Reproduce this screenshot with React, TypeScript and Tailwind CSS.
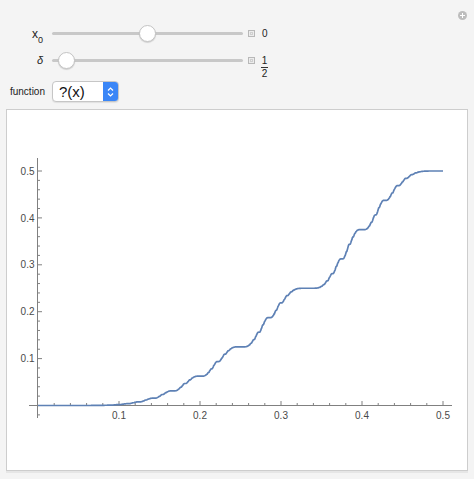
import React from "react";

// Minkowski question mark function via continued fraction expansion
function questionMark(x: number): number {
  if (x <= 0) return 0;
  let r = x;
  let acc = 0;
  let sum = 0;
  let sign = 1;
  for (let k = 0; k < 40; k++) {
    if (r < 1e-12) break;
    r = 1 / r;
    const a = Math.floor(r + 1e-12);
    r = Math.max(0, r - a);
    acc += a;
    if (acc > 60) break;
    sum += sign * 2 * Math.pow(2, -acc);
    sign = -sign;
  }
  return sum;
}

const X = (x: number) => 38 + 810 * x;
const Y = (y: number) => 405.5 - 469 * y;

const curve = Array.from({ length: 801 }, (_, i) => {
  const x = (i / 800) * 0.5;
  return `${X(x).toFixed(2)},${Y(questionMark(x)).toFixed(2)}`;
}).join(" ");

const xTicks = Array.from({ length: 25 }, (_, i) => (i + 1) * 0.02);
const yTicks = Array.from({ length: 27 }, (_, i) => (i - 1) * 0.02);
const isMajor = (v: number) => Math.abs(v * 10 - Math.round(v * 10)) < 1e-6;

function Slider({ thumb }: { thumb: number }) {
  return (
    <div className="relative w-[191px] h-[17px]">
      <div className="absolute left-0 right-0 top-[7px] h-[3px] rounded-full bg-[#c8c8c8]" />
      <div
        className="absolute top-0 w-[17px] h-[17px] rounded-full bg-white border border-[#c4c4c4] shadow-[0_1px_1px_rgba(0,0,0,0.15)]"
        style={{ left: thumb }}
      />
    </div>
  );
}

function PlusBox() {
  return (
    <div className="ml-[5px] w-[7px] h-[7px] border border-[#b8b8b8] bg-[#ececec] flex items-center justify-center">
      <div className="w-[3px] h-[3px] border border-[#cfcfcf]" />
    </div>
  );
}

export default function App() {
  return (
    <div className="relative w-[474px] h-[479px] bg-[#f4f4f4] font-['Liberation_Sans',Arial,sans-serif] text-[#222] overflow-hidden">
      <div className="absolute top-[11px] right-[7px] w-[9px] h-[9px] rounded-full bg-[#bdbdbd] flex items-center justify-center">
        <span className="absolute w-[5px] h-[1px] bg-white" />
        <span className="absolute w-[1px] h-[5px] bg-white" />
      </div>

      <div className="pt-[25px]">
        <div className="flex items-center h-[17px]">
          <div className="w-[46px] pr-[3px] text-right text-[12px] leading-none">
            x<sub className="text-[9px] align-[-3px]">0</sub>
          </div>
          <div className="ml-[6px]">
            <Slider thumb={87} />
          </div>
          <PlusBox />
          <span className="ml-[7px] text-[10px]">0</span>
        </div>

        <div className="flex items-start mt-[10px] h-[19px]">
          <div className="w-[46px] pr-[3px] h-[17px] flex items-center justify-end text-[11px] italic leading-none">
            δ
          </div>
          <div className="ml-[6px]">
            <Slider thumb={6} />
          </div>
          <div className="h-[17px] flex items-center">
            <PlusBox />
          </div>
          <div className="ml-[6px] mt-[4px] flex flex-col items-center text-[10px] leading-[10px]">
            <span>1</span>
            <span className="w-[7px] h-[1px] bg-[#333] my-[1px]" />
            <span>2</span>
          </div>
        </div>

        <div className="flex items-center mt-[10px] h-[21px]">
          <div className="w-[46px] pr-[1px] text-right text-[10px]">function</div>
          <div className="ml-[6px] w-[67px] h-[21px] flex rounded-[4px] border border-[#c6c6c6] bg-white overflow-hidden shadow-[0_1px_1px_rgba(0,0,0,0.08)]">
            <div className="flex-1 flex items-center pl-[6px] text-[15px] leading-none text-[#111]">?(x)</div>
            <div className="w-[15px] bg-[#3a86f7] flex flex-col items-center justify-center">
              <svg width="7" height="12" viewBox="0 0 7 12">
                <path d="M1 4.5 L3.5 2 L6 4.5 M1 7.5 L3.5 10 L6 7.5" fill="none" stroke="white" strokeWidth="1.2" />
              </svg>
            </div>
          </div>
        </div>
      </div>

      <div className="ml-[6px] mt-[7px] w-[462px] h-[362px] bg-white border border-[#cdcdcd] shadow-[0_2px_0_#e6e6e6]">
        <svg width="460" height="360" viewBox="7 110 460 360">
          <line x1="29" y1="405.5" x2="452" y2="405.5" stroke="#808080" strokeWidth="1" />
          <line x1="37.5" y1="158" x2="37.5" y2="418" stroke="#808080" strokeWidth="1" />
          {xTicks.map((v) => (
            <line
              key={`x${v}`}
              x1={X(v)}
              x2={X(v)}
              y1={405.5}
              y2={405.5 - (isMajor(v) ? 4.5 : 2.5)}
              stroke="#808080"
              strokeWidth="1"
            />
          ))}
          {yTicks.map((v) => (
            <line
              key={`y${v}`}
              x1={37.5}
              x2={37.5 + (isMajor(v) ? 4.5 : 2.5)}
              y1={Y(v)}
              y2={Y(v)}
              stroke="#808080"
              strokeWidth="1"
            />
          ))}
          {[0.1, 0.2, 0.3, 0.4, 0.5].map((v) => (
            <text
              key={`xl${v}`}
              x={X(v)}
              y={418.8}
              textAnchor="middle"
              fontSize="10"
              fill="#4a4a4a"
              fontFamily="Liberation Sans, Arial, sans-serif"
            >
              {v.toFixed(1)}
            </text>
          ))}
          {[0.1, 0.2, 0.3, 0.4, 0.5].map((v) => (
            <text
              key={`yl${v}`}
              x={34.5}
              y={Y(v) + 3.6}
              textAnchor="end"
              fontSize="10"
              fill="#4a4a4a"
              fontFamily="Liberation Sans, Arial, sans-serif"
            >
              {v.toFixed(1)}
            </text>
          ))}
          <polyline points={curve} fill="none" stroke="#5e81b5" strokeWidth="1.7" strokeLinejoin="round" />
        </svg>
      </div>
    </div>
  );
}
